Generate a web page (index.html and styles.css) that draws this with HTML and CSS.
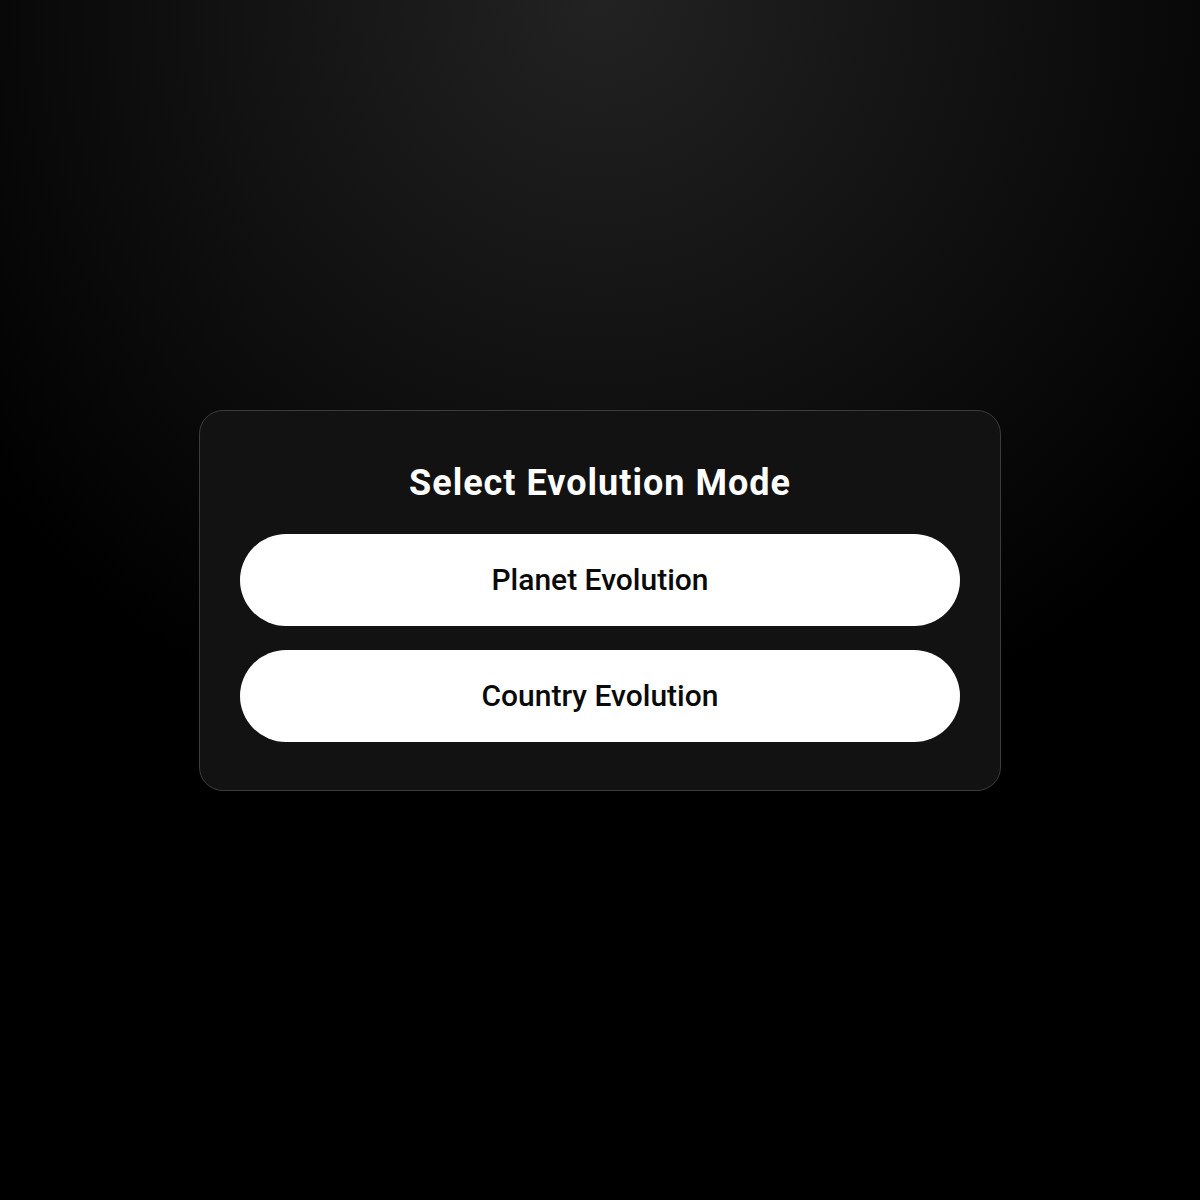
FILE: index.html
```html
<!DOCTYPE html>
<html lang="en">
<head>
<meta charset="utf-8">
<title>Select Evolution Mode</title>
<link rel="stylesheet" href="styles.css">
</head>
<body>
<main class="screen">
  <section class="card">
    <h1 class="title">Select Evolution Mode</h1>
    <div class="options">
      <button class="option">Planet Evolution</button>
      <button class="option">Country Evolution</button>
    </div>
  </section>
</main>
</body>
</html>
```
FILE: styles.css
```css
html, body {
  margin: 0;
  padding: 0;
  height: 100%;
}
body {
  background: #000;
  font-family: Roboto, "Liberation Sans", sans-serif;
}
.screen {
  min-height: 1200px;
  display: flex;
  align-items: center;
  justify-content: center;
  background: radial-gradient(circle 780px at 50% 0%, #222 0%, #000 100%);
}
.card {
  width: 802px;
  box-sizing: border-box;
  padding: 51px 40px 48px;
  background: #121212;
  border: 1px solid #3c3c3c;
  border-radius: 24px;
  display: flex;
  flex-direction: column;
  align-items: center;
}
.title {
  margin: 0 0 30px;
  color: #fff;
  font-size: 36px;
  font-weight: 700;
  line-height: 42px;
  letter-spacing: 1px;
}
.options {
  width: 100%;
  display: flex;
  flex-direction: column;
  gap: 24px;
}
.option {
  height: 92px;
  width: 100%;
  border: none;
  border-radius: 46px;
  background: #fff;
  color: #0a0a0a;
  font-family: Roboto, "Liberation Sans", sans-serif;
  font-size: 30px;
  font-weight: 500;
  cursor: pointer;
}
```
